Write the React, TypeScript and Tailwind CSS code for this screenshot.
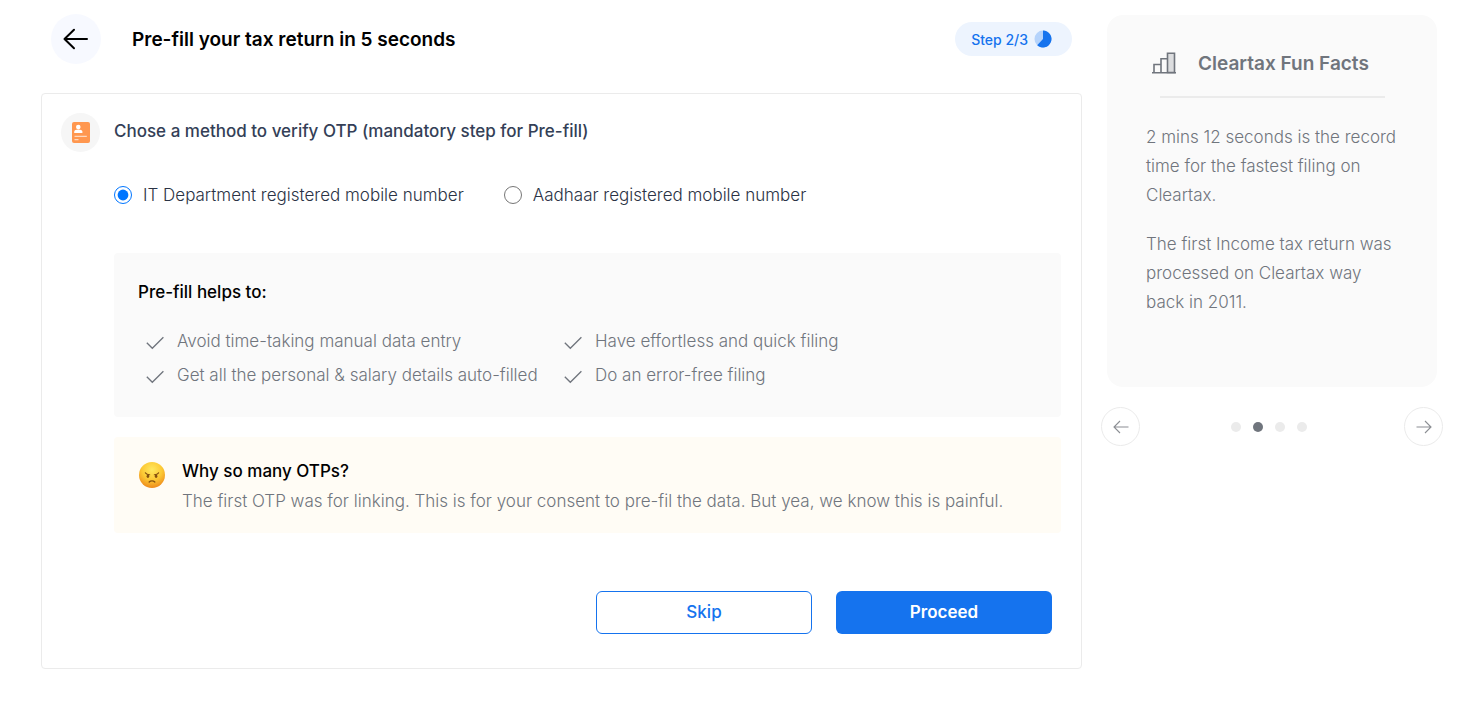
import { useState } from "react";

const methods = [
  { id: "it-department", label: "IT Department registered mobile number" },
  { id: "aadhaar", label: "Aadhaar registered mobile number" },
];

const benefits = [
  "Avoid time-taking manual data entry",
  "Have effortless and quick filing",
  "Get all the personal & salary details auto-filled",
  "Do an error-free filing",
];

const facts = [
  "2 mins 12 seconds is the record time for the fastest filing on Cleartax.",
  "The first Income tax return was processed on Cleartax way back in 2011.",
];

const slides = [1, 2, 3, 4];

function BackIcon() {
  return (
    <svg width="26" height="22" viewBox="0 0 26 22" fill="none" stroke="#000" strokeWidth="2" strokeLinecap="round" aria-hidden="true">
      <path d="M24 11H1.5M11 1.8 1.5 11l9.5 9.2" strokeLinejoin="round" />
    </svg>
  );
}

function StepIcon() {
  return (
    <svg width="18" height="18" viewBox="0 0 18 18" aria-hidden="true">
      <circle cx="9" cy="9" r="8.5" fill="#b5d3fb" />
      <path d="M9 .5a8.5 8.5 0 1 1-5.8 14.7L9 9z" fill="#1573ee" />
    </svg>
  );
}

function ProfileIcon() {
  return (
    <svg width="18" height="21" viewBox="0 0 18 21" aria-hidden="true">
      <rect width="18" height="21" rx="2" fill="#ff974f" />
      <circle cx="6.3" cy="5" r="2.3" fill="#fff" />
      <path d="M2.2 11V9.8c0-1.6 1.8-2.4 4.1-2.4s4.1.8 4.1 2.4V11z" fill="#fff" />
      <path d="M2.5 14.3h12.3M2.5 17.6h4" stroke="#ffd9be" strokeWidth="1.2" />
    </svg>
  );
}

function CheckIcon() {
  return (
    <svg width="18" height="14" viewBox="0 0 18 14" fill="none" stroke="#70757d" strokeWidth="1.3" className="mt-1 shrink-0" aria-hidden="true">
      <path d="M.8 6.8 6.3 12.3 17.4 1.2" />
    </svg>
  );
}

function ChartIcon() {
  return (
    <svg width="26" height="22" viewBox="0 0 26 22" fill="none" stroke="#70757d" strokeWidth="1.6" aria-hidden="true">
      <path d="M16.5 1.2h7v19.3h-7z" fill="#dcdddf" />
      <path d="M10 20.5V6.8h6.5M3 20.5v-8h7M1 20.7h24" />
    </svg>
  );
}

function AngryIcon() {
  return (
    <svg width="28" height="28" viewBox="0 0 28 28" className="shrink-0" role="img" aria-label="Angry face">
      <defs>
        <radialGradient id="face" cx="50%" cy="30%" r="70%">
          <stop offset="0" stopColor="#ffe85f" />
          <stop offset="0.55" stopColor="#fcc934" />
          <stop offset="1" stopColor="#ee8a1c" />
        </radialGradient>
      </defs>
      <circle cx="14" cy="14" r="13" fill="url(#face)" />
      <g fill="none" stroke="#85500f" strokeWidth="1.1" strokeLinecap="round">
        <path d="M7.4 11.8c1.1 1.5 2.6 2 4.3 1.9M20.6 11.8c-1.1 1.5-2.6 2-4.3 1.9" />
        <path d="M11.2 21c1.4-1.5 4.2-1.5 5.6 0" strokeWidth="1.4" />
      </g>
      <ellipse cx="9.9" cy="15.3" rx="1.3" ry="1.7" fill="#85500f" />
      <ellipse cx="18.1" cy="15.3" rx="1.3" ry="1.7" fill="#85500f" />
    </svg>
  );
}

function SlideArrow({ flip = false }: { flip?: boolean }) {
  return (
    <svg width="16" height="14" viewBox="0 0 16 14" fill="none" stroke="#8b8e93" strokeWidth="1.1" className={flip ? "rotate-180" : ""} aria-hidden="true">
      <path d="M15.5 7H1M7 1 1 7l6 6" />
    </svg>
  );
}

function FunFacts() {
  const [active, setActive] = useState(1);
  const move = (step: number) => setActive((active + step + slides.length) % slides.length);

  return (
    <aside className="w-[342px] shrink-0 pt-px">
      <div className="mx-1.5 min-h-[372px] rounded-2xl bg-[#fafafa] pr-9 pl-[39px] pt-8">
        <div className="flex items-center gap-[21px] pl-[5px]">
          <ChartIcon />
          <h2 className="pt-0.5 text-[19px] leading-[30px] font-semibold text-[#70757d]">Cleartax Fun Facts</h2>
        </div>
        <hr className="mr-4 ml-3.5 mt-[17px] border-t-2 border-[#ebebeb]" />
        <div className="mt-[25px] space-y-5 text-[17px] leading-[29px] font-light text-[#70757d]">
          {facts.map((fact) => (
            <p key={fact}>{fact}</p>
          ))}
        </div>
      </div>

      <div className="mt-5 flex items-center justify-between">
        <button type="button" aria-label="Previous fact" onClick={() => move(-1)} className="flex size-[39px] items-center justify-center rounded-full border border-[#ebebeb]">
          <SlideArrow />
        </button>
        <div className="flex gap-3 pr-1.5">
          {slides.map((slide, index) => (
            <button
              key={slide}
              type="button"
              aria-label={`Fact ${slide}`}
              onClick={() => setActive(index)}
              className={`size-[10px] rounded-full ${index === active ? "bg-[#70757d]" : "bg-[#ebebeb]"}`}
            />
          ))}
        </div>
        <button type="button" aria-label="Next fact" onClick={() => move(1)} className="flex size-[39px] items-center justify-center rounded-full border border-[#ebebeb]">
          <SlideArrow flip />
        </button>
      </div>
    </aside>
  );
}

export default function App() {
  const [method, setMethod] = useState("it-department");

  return (
    <div className="flex items-start gap-[19px] bg-white pt-3.5 pr-[37px] pb-9 pl-[41px] font-['Inter',sans-serif] text-[17px]">
      <main className="min-w-0 flex-1">
        <header className="flex items-center px-2.5">
          <button type="button" aria-label="Back" className="flex size-[50px] items-center justify-center rounded-full bg-[#f7f9ff]">
            <BackIcon />
          </button>
          <h1 className="ml-[31px] pt-0.5 text-[19px] font-semibold text-black">Pre-fill your tax return in 5 seconds</h1>
          <div className="ml-auto flex h-[34px] items-center gap-1.5 rounded-full bg-[#edf4fe] pr-5 pl-4 text-sm font-medium text-[#1573ee]">
            <span className="pt-0.5">Step 2/3</span>
            <StepIcon />
          </div>
        </header>

        <section className="mt-[29px] flex gap-3.5 rounded border border-[#ebebeb] pt-[19px] pr-5 pb-[34px] pl-[19px]">
          <div className="flex size-[39px] shrink-0 items-center justify-center rounded-full bg-[#f6f6f6]">
            <ProfileIcon />
          </div>

          <form className="min-w-0 flex-1" onSubmit={(e) => e.preventDefault()}>
            <fieldset>
              <legend className="pt-1.5 leading-6 font-medium text-[#343f57]">Chose a method to verify OTP (mandatory step for Pre-fill)</legend>
              <div className="mt-10 flex flex-wrap gap-x-10 gap-y-3">
                {methods.map((item) => (
                  <label key={item.id} htmlFor={item.id} className="flex items-center gap-[11px] leading-6 font-light text-[#2b3345]">
                    <input
                      id={item.id}
                      type="radio"
                      name="method"
                      checked={method === item.id}
                      onChange={() => setMethod(item.id)}
                      className="size-[18px] accent-[#0075ff]"
                    />
                    {item.label}
                  </label>
                ))}
              </div>
            </fieldset>

            <div className="mt-[46px] rounded bg-[#fafafa] px-6 pt-[27px] pb-[25px]">
              <h2 className="leading-6 font-medium text-black">Pre-fill helps to:</h2>
              <ul className="mt-5 grid grid-cols-[418px_1fr] pl-2">
                {benefits.map((benefit) => (
                  <li key={benefit} className="flex items-center gap-[13px] leading-[34px] font-light text-[#70757d]">
                    <CheckIcon />
                    {benefit}
                  </li>
                ))}
              </ul>
            </div>

            <div className="mt-5 flex gap-4 rounded bg-[#fffcf5] px-6 pt-[19px] pb-[17px]">
              <div className="pt-[5px]">
                <AngryIcon />
              </div>
              <div className="leading-[30px]">
                <h2 className="font-medium text-black">Why so many OTPs?</h2>
                <p className="font-light text-[#70757d]">
                  The first OTP was for linking. This is for your consent to pre-fil the data. But yea, we know this is painful.
                </p>
              </div>
            </div>

            <div className="mt-[58px] flex justify-end gap-6 pr-[9px]">
              <button type="button" className="h-[43px] w-[216px] rounded-md border border-[#1573ee] font-medium text-[#1573ee]">
                Skip
              </button>
              <button type="submit" className="h-[43px] w-[216px] rounded-md bg-[#1573ee] font-semibold text-white">
                Proceed
              </button>
            </div>
          </form>
        </section>
      </main>

      <FunFacts />
    </div>
  );
}
